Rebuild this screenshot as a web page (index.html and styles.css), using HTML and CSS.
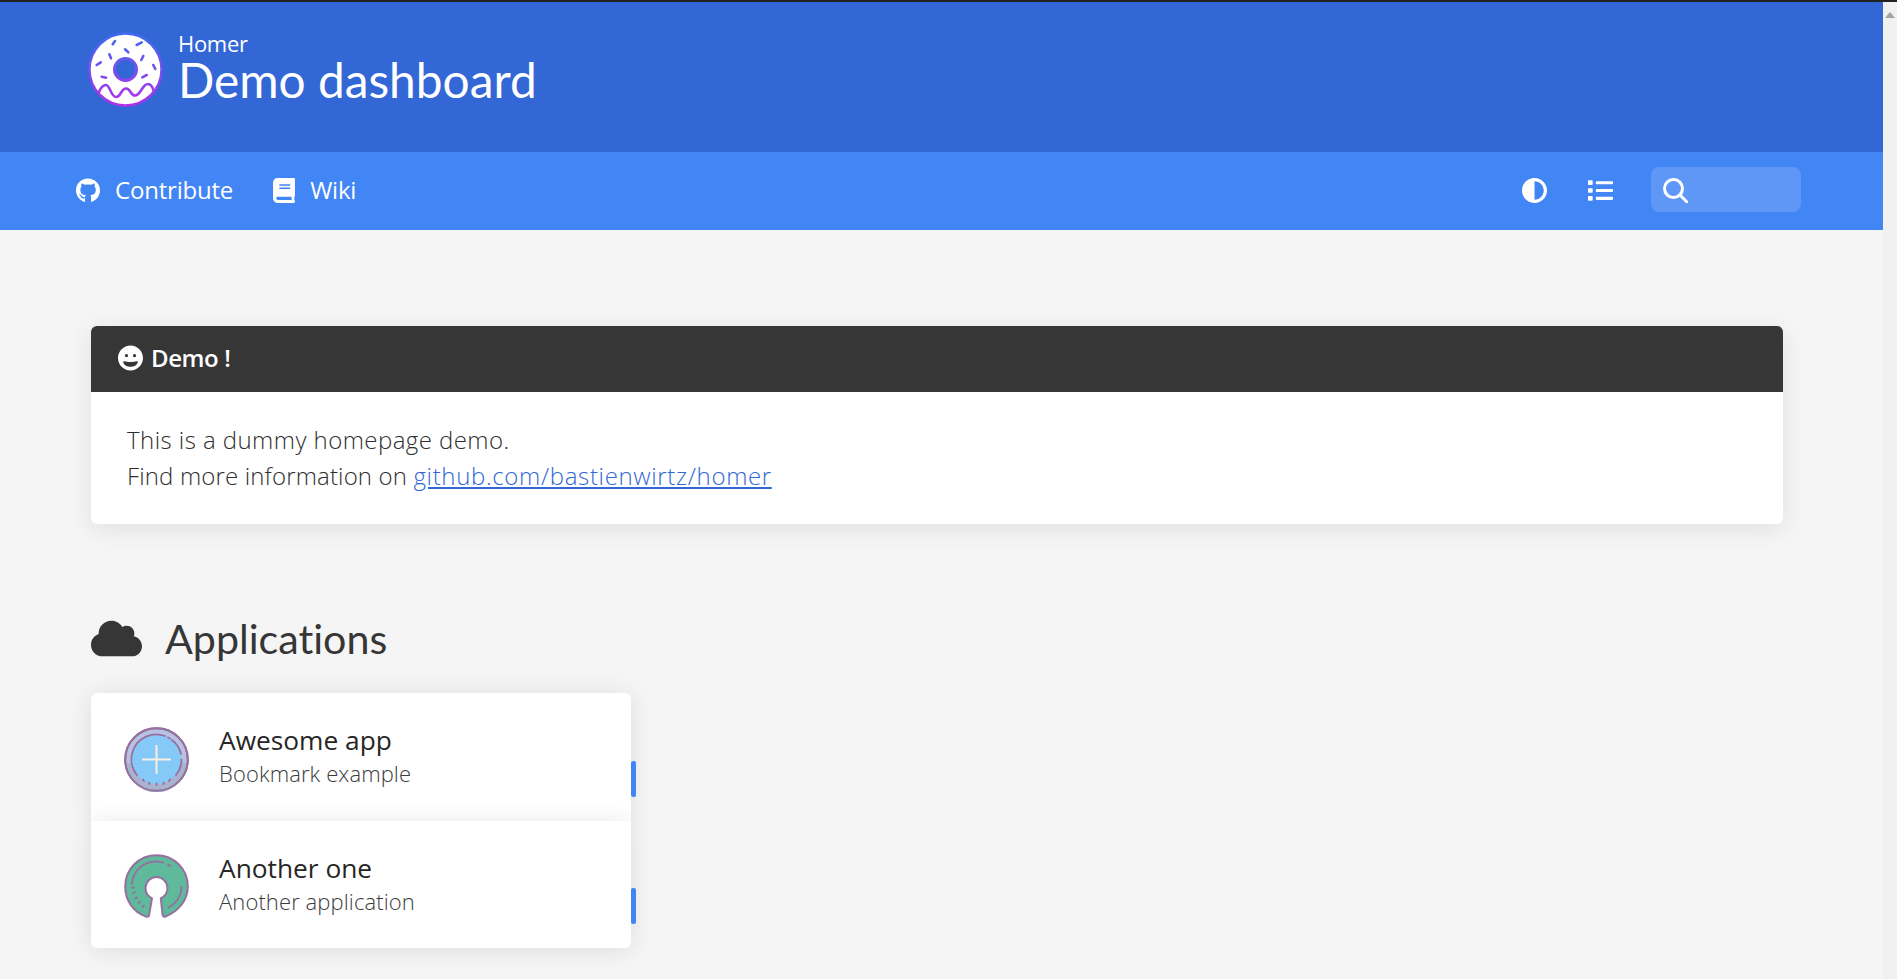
FILE: index.html
```html
<!DOCTYPE html>
<html lang="en">
<head>
<meta charset="utf-8">
<title>Demo dashboard</title>
<link rel="stylesheet" href="styles.css">
</head>
<body>
<div class="viewport">
  <div class="page">
    <header class="hero">
      <svg class="logo" viewBox="0 0 75 75" aria-hidden="true">
        <defs>
          <linearGradient id="dgu" gradientUnits="userSpaceOnUse" x1="0" y1="0" x2="0" y2="75">
            <stop offset="0" stop-color="#3a6ef2"/>
            <stop offset="1" stop-color="#b72ee9"/>
          </linearGradient>
        </defs>
        <circle cx="37.5" cy="37.5" r="36" fill="#fff" stroke="url(#dgu)" stroke-width="2.4"/>
        <circle cx="37.5" cy="37.5" r="11" fill="#3367d6" stroke="url(#dgu)" stroke-width="3"/>
        <g stroke="url(#dgu)" stroke-width="2.6" stroke-linecap="round" fill="none">
          <path d="M27 9 24.700 12.300"/>
          <path d="M48.700 13 53.700 10.300"/>
          <path d="M21.300 22.300 23 26.300"/>
          <path d="M37 17.300 40.300 20.300"/>
          <path d="M55.300 24 53.300 28"/>
          <path d="M12.700 30.300 8.700 33"/>
          <path d="M65.300 33 67.300 37"/>
          <path d="M13.700 44.700 18 45.700"/>
          <path d="M58.700 43 54.300 45.300"/>
          <path d="M11 60C13 55 15 53 18 53C22 53 23 65 28 65C33 65 33 56.500 38 56.500C43 56.500 42 63.500 47 63.500C53 63.500 54 52 60 52C63 52 65 56 66 60"/>
        </g>
      </svg>
      <div class="brand">
        <span class="brand-sub">Homer</span>
        <h1 class="brand-title">Demo dashboard</h1>
      </div>
    </header>

    <nav class="navbar">
      <div class="nav-links">
        <a class="nav-link" href="#">
          <svg class="nav-icon github" viewBox="0 0 496 512" aria-hidden="true"><path d="M165.9 397.4c0 2-2.3 3.6-5.2 3.6-3.3 0-5.6-1.6-5.6-3.6 0-2 2.3-3.6 5.2-3.6 3-.3 5.6 1.3 5.6 3.6zm-31.1-4.5c-.7 2 1.3 4.3 4.3 4.9 2.6 1 5.6 0 6.2-2s-1.3-4.3-4.3-5c-2.6-.7-5.5.3-6.2 2.1zm44.2-1.7c-2.9.7-4.9 2.6-4.6 4.9.3 2 2.9 3.3 5.9 2.6 2.9-.7 4.9-2.6 4.6-4.6-.3-1.9-3-3.2-5.9-2.9zM244.8 8C106.1 8 0 113.3 0 252c0 110.9 69.8 205.8 169.5 239.2 12.8 2.3 17.3-5.6 17.3-12.1 0-6.2-.3-40.4-.3-61.4 0 0-70 15-84.7-29.8 0 0-11.4-29.1-27.8-36.6 0 0-22.9-15.7 1.6-15.4 0 0 24.9 2 38.6 25.8 21.9 38.6 58.6 27.5 72.9 20.9 2.3-16 8.8-27.1 16-33.7-55.9-6.2-112.3-14.3-112.3-110.5 0-27.5 7.6-41.3 23.6-58.9-2.6-6.5-11.1-33.3 2.6-67.9 20.9-6.5 69 27 69 27 20-5.6 41.5-8.5 62.8-8.5s42.8 2.9 62.8 8.5c0 0 48.1-33.6 69-27 13.7 34.7 5.2 61.4 2.6 67.9 16 17.7 25.8 31.5 25.8 58.9 0 96.5-58.9 104.2-114.8 110.5 9.2 7.9 17 22.9 17 46.4 0 33.7-.3 75.4-.3 83.6 0 6.5 4.6 14.4 17.3 12.1C428.2 457.8 496 362.9 496 252 496 113.3 383.5 8 244.8 8z"/></svg>
          <span>Contribute</span>
        </a>
        <a class="nav-link" href="#">
          <svg class="nav-icon book" viewBox="0 0 448 512" aria-hidden="true"><path d="M448 360V24c0-13.3-10.7-24-24-24H96C43 0 0 43 0 96v320c0 53 43 96 96 96h328c13.3 0 24-10.7 24-24v-16c0-7.5-3.5-14.3-8.9-18.7-4.2-15.4-4.2-59.3 0-74.7 5.4-4.3 8.9-11.1 8.9-18.6zM128 134c0-3.3 2.7-6 6-6h212c3.3 0 6 2.7 6 6v20c0 3.3-2.7 6-6 6H134c-3.3 0-6-2.7-6-6v-20zm0 64c0-3.3 2.7-6 6-6h212c3.3 0 6 2.7 6 6v20c0 3.3-2.7 6-6 6H134c-3.3 0-6-2.7-6-6v-20zm253.4 250H96c-17.7 0-32-14.3-32-32 0-17.6 14.4-32 32-32h285.4c-1.9 17.1-1.9 46.9 0 64z"/></svg>
          <span>Wiki</span>
        </a>
      </div>
      <div class="nav-tools">
        <svg class="tool-icon adjust" viewBox="8 8 496 496" aria-hidden="true"><path d="M8 256c0 136.966 111.033 248 248 248s248-111.034 248-248S392.966 8 256 8 8 119.033 8 256zm248 184V72c101.705 0 184 82.311 184 184 0 101.705-82.311 184-184 184z"/></svg>
        <svg class="tool-icon list" viewBox="0 0 512 512" aria-hidden="true"><path d="M80 368H16a16 16 0 0 0-16 16v64a16 16 0 0 0 16 16h64a16 16 0 0 0 16-16v-64a16 16 0 0 0-16-16zm0-320H16A16 16 0 0 0 0 64v64a16 16 0 0 0 16 16h64a16 16 0 0 0 16-16V64a16 16 0 0 0-16-16zm0 160H16a16 16 0 0 0-16 16v64a16 16 0 0 0 16 16h64a16 16 0 0 0 16-16v-64a16 16 0 0 0-16-16zm416 176H176a16 16 0 0 0-16 16v32a16 16 0 0 0 16 16h320a16 16 0 0 0 16-16v-32a16 16 0 0 0-16-16zm0-320H176a16 16 0 0 0-16 16v32a16 16 0 0 0 16 16h320a16 16 0 0 0 16-16V80a16 16 0 0 0-16-16zm0 160H176a16 16 0 0 0-16 16v32a16 16 0 0 0 16 16h320a16 16 0 0 0 16-16v-32a16 16 0 0 0-16-16z"/></svg>
        <div class="search">
          <svg class="search-icon" viewBox="0 0 25 25" aria-hidden="true"><circle cx="10.500" cy="10.500" r="9" fill="none" stroke="#fff" stroke-width="3"/><path d="M17 17 24 24" fill="none" stroke="#fff" stroke-width="3" stroke-linecap="round"/></svg>
        </div>
      </div>
    </nav>

    <main class="content">
      <section class="message">
        <div class="message-header">
          <svg class="smile" viewBox="0 0 496 512" aria-hidden="true"><path d="M248 8C111 8 0 119 0 256s111 248 248 248 248-111 248-248S385 8 248 8zm80 168c17.7 0 32 14.3 32 32s-14.3 32-32 32-32-14.3-32-32 14.3-32 32-32zm-160 0c17.7 0 32 14.3 32 32s-14.3 32-32 32-32-14.3-32-32 14.3-32 32-32zm80 256c-60.6 0-134.5-38.3-143.8-93.3-2-11.8 9.3-21.6 20.7-17.9C155.1 330.5 200 336 248 336s92.9-5.5 123.1-15.2c11.5-3.7 22.6 6.2 20.7 17.9-9.3 55-83.2 93.3-143.8 93.3z"/></svg>
          <span>Demo !</span>
        </div>
        <div class="message-body">
          <span class="line-one">This is a dummy homepage demo.</span><br>
          <span class="line-two">Find more information on </span><a href="#">github.com/bastienwirtz/homer</a>
        </div>
      </section>

      <h2 class="group-title">
        <svg class="cloud" viewBox="0 32 640 448" aria-hidden="true"><path d="M537.6 226.6c4.1-10.7 6.4-22.4 6.4-34.6 0-53-43-96-96-96-19.7 0-38.1 6-53.3 16.2C367 64.2 315.3 32 256 32c-88.4 0-160 71.6-160 160 0 2.7.1 5.4.2 8.1C40.2 219.8 0 273.2 0 336c0 79.5 64.5 144 144 144h368c70.7 0 128-57.3 128-128 0-61.9-44-113.6-102.4-125.4z"/></svg>
        <span>Applications</span>
      </h2>

      <div class="cards">
        <article class="card card-first">
          <svg class="app-icon" viewBox="0 0 65 65" aria-hidden="true">
            <circle cx="32.500" cy="32.500" r="31.300" fill="#b8c2e2" stroke="#96709f" stroke-width="2"/>
            <path d="M3 36a29.500 29.500 0 0 0 59 0z" fill="#a9b3cf"/>
            <circle cx="32.500" cy="32.500" r="31.300" fill="none" stroke="#96709f" stroke-width="2"/>
            <circle cx="32.500" cy="32.500" r="24.500" fill="#85c9f8"/>
            <path d="M41 9A25 25 0 0 0 9 23.500 25 25 0 0 0 13 48M57.500 32.500A25 25 0 0 1 52 48M57 27A25 25 0 0 0 48 13M44 10.500 46 11.500" fill="none" stroke="#96709f" stroke-width="1.800" stroke-linecap="round"/>
            <path d="M19 52.500 20 54M25 55.500 25.600 57M32.500 56.500V58M40 55.500 39.400 57M46 52.500 45 54" stroke="#96709f" stroke-width="1.800" stroke-linecap="round"/>
            <path d="M32.500 18V47M18 32.500H47" stroke="#f8efe4" stroke-width="2"/>
          </svg>
          <div class="app-text">
            <p class="app-title">Awesome app</p>
            <p class="app-sub">Bookmark example</p>
          </div>
          <span class="tag-bar"></span>
        </article>
        <article class="card card-last">
          <svg class="app-icon" viewBox="0 0 65 65" aria-hidden="true">
            <path d="M22 62.500C9 58 1.200 46 1.200 32.500C1.200 15 15 1.200 32.500 1.200S63.800 15 63.800 32.500C63.800 46 55 57 41.500 62.500C40 63 39 62.500 38.600 61L36.800 44.500C40.500 42.500 43.500 38.500 43.500 34C43.500 28 38.500 23 32.500 23S21.500 28 21.500 34C21.500 38.500 24.500 42.500 28 44.300L25 61.500C24.600 62.800 23.500 63 22 62.500Z" fill="#5fb99b" stroke="#96709f" stroke-width="2" stroke-linejoin="round"/>
            <path d="M8 30C9 17 19 7.500 32 7.500C35 7.500 37 8 39.500 8.600M44 10.500 46.500 12M57.500 33C57.500 41 53 49 44.500 53.500" fill="none" stroke="#96709f" stroke-width="1.800" stroke-linecap="round"/>
            <path d="M8 33.500 10 33.500M9 39 11 38.500M11 44.500 13 43.500M14.500 49 16 48M18.500 53 20 51.500" stroke="#96709f" stroke-width="1.800" stroke-linecap="round"/>
          </svg>
          <div class="app-text">
            <p class="app-title">Another one</p>
            <p class="app-sub">Another application</p>
          </div>
          <span class="tag-bar"></span>
        </article>
      </div>
    </main>
  </div>
  <aside class="scrollbar"><span class="scroll-arrow"></span></aside>
</div>
</body>
</html>
```

FILE: styles.css
```css
* { box-sizing: border-box; }
html, body { margin: 0; height: 100%; overflow: hidden; }
body {
  background: #f5f5f5;
  color: #2f2f2f;
  font-family: "Open Sans", "Lato", sans-serif;
  font-size: 24px;
  font-weight: 300;
  line-height: 36px;
}
.viewport { display: flex; height: 979px; border-top: 2px solid #222; }
.page { flex: 1; min-width: 0; overflow: hidden; }
.scrollbar { width: 14px; background: #f1f1f1; padding: 10px 0 0 2px; }
.scroll-arrow {
  display: block; width: 0; height: 0;
  border-left: 5px solid transparent;
  border-right: 5px solid transparent;
  border-bottom: 6px solid #a3a3a3;
}

.hero {
  background: #3367d6;
  height: 150px;
  display: flex;
  align-items: flex-start;
  padding: 30px 0 0 88px;
  color: #fff;
}
.logo { width: 75px; height: 75px; flex: none; }
.brand { margin-left: 15px; display: flex; flex-direction: column; }
.brand-sub { font-size: 22px; line-height: 26px; font-weight: 400; margin-top: -2px; letter-spacing: -.3px; }
.brand-title { margin: -2px 0 0; font-family: "Lato", sans-serif; font-size: 47.800px; font-weight: 400; line-height: 52px; font-variant-ligatures: none; }

.navbar {
  background: #4285f4;
  height: 78px;
  display: flex;
  align-items: center;
  justify-content: space-between;
  color: #fff;
  padding: 0 82px 2px 76px;
}
.nav-links { display: flex; align-items: center; gap: 40px; }
.nav-link { display: flex; align-items: center; color: #fff; text-decoration: none; font-weight: 400; gap: 15px; letter-spacing: -.2px; }
.nav-icon { height: 25px; fill: #fff; display: block; }
.github { width: 24px; }
.book { width: 22px; }
.nav-tools { display: flex; align-items: center; }
.tool-icon { width: 25px; height: 25px; fill: #fff; display: block; }
.adjust { margin-right: 41px; }
.list { margin-right: 38px; }
.search {
  width: 150px; height: 45px;
  background: rgba(255, 255, 255, .15);
  border-radius: 8px;
  display: flex; align-items: center;
  padding-left: 12px;
  margin-bottom: 1px;
}
.search-icon { width: 25px; height: 25px; display: block; margin-top: 2px; }

.content { padding: 96px 100px 0 91px; }
.message {
  width: 1692px;
  border-radius: 6px;
  background: #fff;
  box-shadow: 0 5px 25px rgba(0, 0, 0, .09);
  overflow: hidden;
}
.message-header {
  height: 66px;
  background: #363636;
  color: #fff;
  display: flex; align-items: center;
  padding: 0 0 2px 27px;
  font-weight: 600;
  gap: 8px;
  letter-spacing: -.4px;
}
.smile { width: 25px; height: 26px; fill: #fff; display: block; }
.message-body { padding: 30px 36px; height: 132px; }
.message-body a { color: #3367d6; letter-spacing: .65px; }
.line-one { letter-spacing: .44px; }
.line-two { letter-spacing: .15px; }

.group-title {
  margin: 89px 0 0;
  display: flex; align-items: center;
  gap: 23px;
  font-family: "Lato", sans-serif;
  font-weight: 400;
  font-size: 41.200px;
  line-height: 50px;
  color: #363636;
  font-variant-ligatures: none;
}
.cloud { width: 51px; height: 37px; fill: #363636; display: block; }

.cards { width: 540px; margin-top: 30px; }
.card {
  position: relative;
  background: #fff;
  height: 127px;
  display: flex; align-items: center;
  padding-left: 33px;
  box-shadow: 0 2px 25px rgba(0, 0, 0, .1);
}
.card-first { border-radius: 6px 6px 0 0; height: 128px; }
.card-last { border-radius: 0 0 6px 6px; }
.app-icon { width: 65px; height: 65px; flex: none; display: block; margin-top: 4px; }
.app-text { margin-left: 30px; margin-top: -2px; }
.app-title { margin: 0 0 2px; font-weight: 500; font-size: 26.300px; line-height: 32px; color: #262626; }
.app-sub { margin: 0; font-size: 22px; line-height: 30px; color: #3c3c3c; letter-spacing: .1px; }
.tag-bar {
  position: absolute;
  right: -5px; top: 68px;
  width: 5px; height: 36px;
  background: #4285f4;
  border-radius: 2px;
}
.card-last .tag-bar { top: 67px; }
```
